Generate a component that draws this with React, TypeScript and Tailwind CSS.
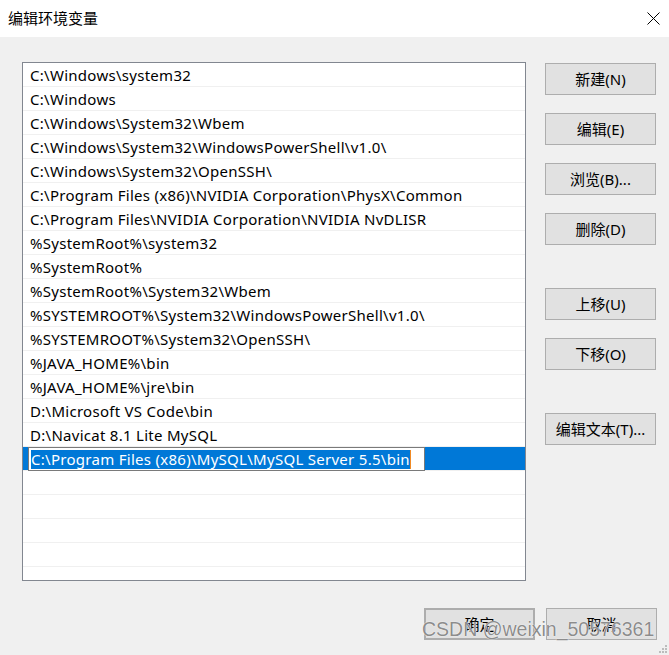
import React from "react";

const paths = [
  "C:\\Windows\\system32",
  "C:\\Windows",
  "C:\\Windows\\System32\\Wbem",
  "C:\\Windows\\System32\\WindowsPowerShell\\v1.0\\",
  "C:\\Windows\\System32\\OpenSSH\\",
  "C:\\Program Files (x86)\\NVIDIA Corporation\\PhysX\\Common",
  "C:\\Program Files\\NVIDIA Corporation\\NVIDIA NvDLISR",
  "%SystemRoot%\\system32",
  "%SystemRoot%",
  "%SystemRoot%\\System32\\Wbem",
  "%SYSTEMROOT%\\System32\\WindowsPowerShell\\v1.0\\",
  "%SYSTEMROOT%\\System32\\OpenSSH\\",
  "%JAVA_HOME%\\bin",
  "%JAVA_HOME%\\jre\\bin",
  "D:\\Microsoft VS Code\\bin",
  "D:\\Navicat 8.1 Lite MySQL",
];

function Btn({ label, className = "" }: { label: string; className?: string }) {
  return (
    <div
      className={
        "w-[111px] h-[32px] flex items-center justify-center bg-[#e1e1e1] border border-[#adadad] text-[15px] text-black " +
        className
      }
    >
      {label}
    </div>
  );
}

export default function App() {
  return (
    <div
      className="relative w-[669px] h-[655px] bg-[#f0f0f0] overflow-hidden text-black"
      style={{ fontFamily: '"Noto Sans", "Noto Sans CJK SC", sans-serif' }}
    >
      {/* title bar */}
      <div className="h-[37px] bg-white flex items-center justify-between pl-[8px] pr-[9px]">
        <span className="text-[15px] leading-none">编辑环境变量</span>
        <svg width="13" height="13" viewBox="0 0 13 13" className="text-black">
          <path d="M0.5 0.5 L12.5 12.5 M12.5 0.5 L0.5 12.5" stroke="currentColor" strokeWidth="1" fill="none" />
        </svg>
      </div>

      {/* body */}
      <div className="flex pt-[25px] pl-[22px]">
        <div className="w-[504px] h-[519px] border border-[#828790] bg-white overflow-hidden">
          {paths.map((p) => (
            <div
              key={p}
              className="h-[24px] border-b border-[#f0f0f0] flex items-center pl-[7px] pt-[2px] text-[15px] tracking-[0.28px] whitespace-nowrap"
            >
              {p}
            </div>
          ))}
          <div className="h-[24px] border-b border-[#f0f0f0] bg-[#0078d7] flex items-stretch pl-[5px]">
            <div className="w-[397px] h-[24px] border border-[#7a7a7a] bg-white flex items-center pl-[2px]">
              <span className="bg-[#0078d7] text-white text-[15px] tracking-[0.28px] whitespace-nowrap h-[19px] flex items-center pt-[1px]">
                C:\Program Files (x86)\MySQL\MySQL Server 5.5\bin
              </span>
              <span className="w-[1px] h-[19px] bg-[#f08a24]" />
            </div>
          </div>
          {[0, 1, 2, 3, 4].map((i) => (
            <div key={i} className="h-[24px] border-b border-[#f0f0f0]" />
          ))}
        </div>

        <div className="ml-[19px] pt-[1px] flex flex-col">
          <Btn label="新建(N)" />
          <Btn label="编辑(E)" className="mt-[18px]" />
          <Btn label="浏览(B)..." className="mt-[18px]" />
          <Btn label="删除(D)" className="mt-[18px]" />
          <Btn label="上移(U)" className="mt-[43px]" />
          <Btn label="下移(O)" className="mt-[18px]" />
          <Btn label="编辑文本(T)..." className="mt-[43px]" />
        </div>
      </div>

      {/* bottom buttons */}
      <div className="flex pl-[424px] pt-[27px] gap-[11px]">
        <Btn label="确定" className="border-2 border-[#0078d7]" />
        <Btn label="取消" />
      </div>

      {/* watermark */}
      <div
        className="absolute left-[422px] top-[620px] text-[19.5px] leading-none whitespace-nowrap text-[#8c8c8c]"
        style={{ fontFamily: '"Liberation Sans", Arial, sans-serif', textShadow: "0 0 1px #fff, 0 0 1px #fff" }}
      >
        CSDN @weixin_50576361
      </div>

      {/* resize grip */}
      <div className="absolute right-[2px] bottom-[2px] grid grid-cols-3 gap-[1px]">
        {[0, 0, 1, 0, 1, 1, 1, 1, 1].map((v, i) => (
          <span key={i} className={"w-[2px] h-[2px] " + (v ? "bg-[#bcbcbc]" : "")} />
        ))}
      </div>
    </div>
  );
}
